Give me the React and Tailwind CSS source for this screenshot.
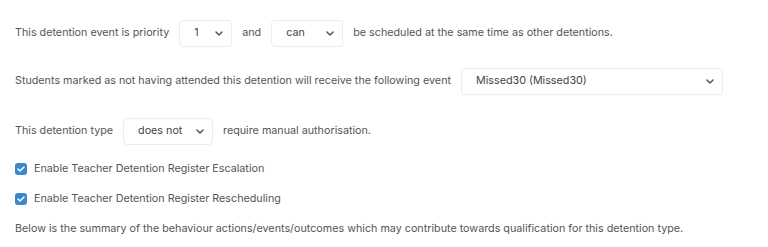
import React from 'react';

const Chevron = () => (
  <svg width="8" height="5" viewBox="0 0 8 5" fill="none" className="shrink-0">
    <path d="M1 1l3 3 3-3" stroke="#555" strokeWidth="1.5" strokeLinecap="round" strokeLinejoin="round" />
  </svg>
);

const FakeSelect = ({ value, width }) => (
  <div
    className={`flex items-center justify-between h-[27px] pl-[14px] pr-[8px] border border-[#ececec] rounded-[4px] bg-white text-[#444] ${width}`}
  >
    <span>{value}</span>
    <Chevron />
  </div>
);

const Check = () => (
  <div className="w-[12px] h-[12px] rounded-[3px] bg-[#3d85cc] flex items-center justify-center shrink-0">
    <svg width="8" height="6" viewBox="0 0 8 6" fill="none">
      <path d="M1 3l2 2 4-4" stroke="white" strokeWidth="1.5" strokeLinecap="round" strokeLinejoin="round" />
    </svg>
  </div>
);

export default function App() {
  return (
    <div className="w-[768px] h-[247px] bg-white pl-[15px] text-[10.75px] text-[#555] overflow-hidden" style={{ fontFamily: 'Inter, "Noto Sans", sans-serif' }}>
      {/* Priority row */}
      <div className="flex items-center gap-[10px] pt-[20px]">
        <span>This detention event is priority</span>
        <FakeSelect value="1" width="w-[53px]" />
        <span>and</span>
        <FakeSelect value="can" width="w-[72px]" />
        <span>be scheduled at the same time as other detentions.</span>
      </div>

      {/* Missed event row */}
      <div className="flex items-center gap-[10px] mt-[21px]">
        <span>Students marked as not having attended this detention will receive the following event</span>
        <FakeSelect value="Missed30 (Missed30)" width="w-[262px]" />
      </div>

      {/* Authorisation row */}
      <div className="flex items-center gap-[10px] mt-[23px]">
        <span>This detention type</span>
        <FakeSelect value="does not" width="w-[90px]" />
        <span>require manual authorisation.</span>
      </div>

      {/* Checkboxes */}
      <div className="flex items-center gap-[7px] mt-[18px] h-[12px]">
        <Check />
        <span>Enable Teacher Detention Register Escalation</span>
      </div>
      <div className="flex items-center gap-[7px] mt-[18px] h-[12px]">
        <Check />
        <span>Enable Teacher Detention Register Rescheduling</span>
      </div>

      <p className="mt-[16px]">
        Below is the summary of the behaviour actions/events/outcomes which may contribute towards qualification for this detention type.
      </p>
    </div>
  );
}
